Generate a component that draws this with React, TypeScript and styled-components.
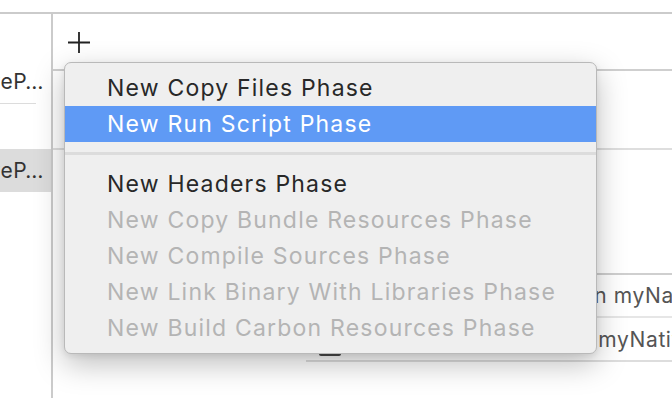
import React from "react";
import styled, { createGlobalStyle } from "styled-components";

const Global = createGlobalStyle`
  html, body {
    margin: 0;
    padding: 0;
    background: #ffffff;
  }
  body {
    font-family: Inter, "Liberation Sans", Arial, sans-serif;
    color: #2d2d2d;
    -webkit-font-smoothing: antialiased;
  }
`;

type MenuEntry = { label: string; state?: "selected" | "disabled" } | "separator";

const MENU: MenuEntry[] = [
  { label: "New Copy Files Phase" },
  { label: "New Run Script Phase", state: "selected" },
  "separator",
  { label: "New Headers Phase" },
  { label: "New Copy Bundle Resources Phase", state: "disabled" },
  { label: "New Compile Sources Phase", state: "disabled" },
  { label: "New Link Binary With Libraries Phase", state: "disabled" },
  { label: "New Build Carbon Resources Phase", state: "disabled" },
];

export default function App() {
  return (
    <>
      <Global />
      <Window>
        <TopBar />
        <Body>
          <Sidebar>
            <SideRow>
              <SideText>myNativeP…</SideText>
            </SideRow>
            <SideSep />
            <SideRow selected>
              <SideText>myNativeP…</SideText>
            </SideRow>
          </Sidebar>

          <Main>
            <Toolbar>
              <AddButton aria-label="Add build phase">
                <svg width="22" height="22" viewBox="0 0 22 22">
                  <path d="M11 0v21M0 10.5h22" stroke="#222" strokeWidth="1.8" fill="none" />
                </svg>
              </AddButton>
            </Toolbar>
            <Section height={77} />
            <Section height={123} borderless />
            <Table>
              <TableRow tone="#cfcfcf" height={41}>
                <Cell indent={236}>Run in myNativeApp</Cell>
              </TableRow>
              <TableRow tone="#e6e6e6" height={42}>
                <Check />
                <Cell indent={252}>For myNativeApp</Cell>
              </TableRow>
              <TableRow tone="#dddddd" height={20} />
            </Table>

            <Menu role="menu">
              {MENU.map((entry, i) =>
                entry === "separator" ? (
                  <MenuSep key={i} />
                ) : (
                  <MenuItem key={i} state={entry.state}>
                    {entry.label}
                  </MenuItem>
                )
              )}
            </Menu>
          </Main>
        </Body>
      </Window>
    </>
  );
}

const Window = styled.div`
  width: 672px;
  height: 398px;
  overflow: hidden;
  display: flex;
  flex-direction: column;
`;

const TopBar = styled.div`
  height: 12px;
  border-bottom: 2px solid #cbcbcb;
  flex-shrink: 0;
`;

const Body = styled.div`
  flex: 1;
  display: flex;
`;

const Sidebar = styled.div`
  width: 51px;
  flex-shrink: 0;
  border-right: 2px solid #cbcbcb;
  padding-top: 46px;
  display: flex;
  flex-direction: column;
`;

const SideRow = styled.div<{ selected?: boolean }>`
  height: 43px;
  display: flex;
  align-items: center;
  justify-content: flex-end;
  padding-right: 7px;
  overflow: hidden;
  background: ${(p) => (p.selected ? "#dcdcdc" : "transparent")};
  margin-top: ${(p) => (p.selected ? "45px" : "0")};
`;

const SideText = styled.span`
  white-space: nowrap;
  font-size: 21px;
  letter-spacing: 0.6px;
  color: #333;
`;

const SideSep = styled.div`
  width: 36px;
  height: 1px;
  background: #dcdcdc;
`;

const Main = styled.div`
  flex: 1;
  position: relative;
  display: flex;
  flex-direction: column;
`;

const Toolbar = styled.div`
  height: 57px;
  box-sizing: border-box;
  border-bottom: 2px solid #cfcfcf;
  display: flex;
  align-items: flex-start;
  padding: 18px 0 0 15px;
  flex-shrink: 0;
`;

const AddButton = styled.div`
  width: 22px;
  height: 22px;
  display: flex;
`;

const Section = styled.div<{ height: number; borderless?: boolean }>`
  height: ${(p) => p.height}px;
  border-bottom: ${(p) => (p.borderless ? "none" : "2px solid #dedede")};
  flex-shrink: 0;
`;

const Table = styled.div`
  margin-left: 253px;
  display: flex;
  flex-direction: column;
`;

const TableRow = styled.div<{ tone: string; height: number }>`
  height: ${(p) => p.height}px;
  border-top: 2px solid ${(p) => p.tone};
  display: flex;
  align-items: center;
  position: relative;
  flex-shrink: 0;
`;

const Cell = styled.div<{ indent: number }>`
  padding-left: ${(p) => p.indent}px;
  white-space: nowrap;
  font-size: 21px;
  letter-spacing: 0.6px;
  color: #555;
`;

const Check = styled.div`
  position: absolute;
  left: 13px;
  top: 36px;
  width: 22px;
  height: 2px;
  border-radius: 0 0 3px 3px;
  background: #4a4a4a;
`;

const Menu = styled.div`
  position: absolute;
  left: 11px;
  top: 48px;
  width: 533px;
  height: 292px;
  box-sizing: border-box;
  padding: 7px 0;
  background: #efefef;
  border: 1px solid #b9b9b9;
  border-radius: 7px;
  box-shadow: 0 10px 30px rgba(0, 0, 0, 0.26), 0 2px 6px rgba(0, 0, 0, 0.08);
  display: flex;
  flex-direction: column;
  z-index: 2;
`;

const MenuItem = styled.div<{ state?: "selected" | "disabled" }>`
  height: 36px;
  line-height: 36px;
  padding-left: 42px;
  font-size: 23px;
  letter-spacing: 1.2px;
  white-space: nowrap;
  background: ${(p) => (p.state === "selected" ? "#5f9af5" : "transparent")};
  color: ${(p) =>
    p.state === "selected" ? "#ffffff" : p.state === "disabled" ? "#b4b4b4" : "#282828"};
`;

const MenuSep = styled.div`
  height: 24px;
  display: flex;
  align-items: center;
  &::after {
    content: "";
    flex: 1;
    height: 3px;
    margin-top: -2px;
    background: #dcdcdc;
  }
`;
